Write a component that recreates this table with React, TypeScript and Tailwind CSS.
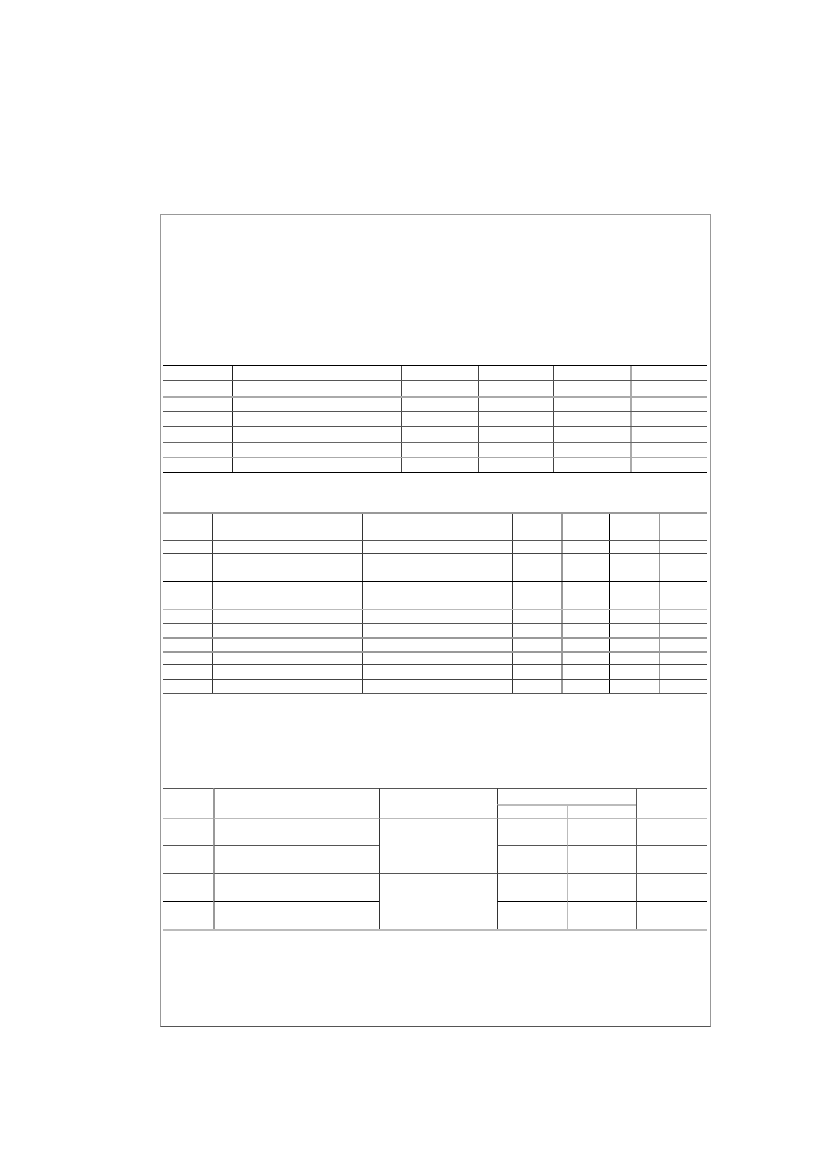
type Row = { cls: string };

const t1Cols = [
  'w-[69px]',
  'w-[169px] border-l border-l-[#222]',
  'w-[77px] border-l border-l-[#444]',
  'w-[75px] border-l border-l-[#444]',
  'w-[77px] border-l border-l-[#444]',
  'w-[77px] border-l-2 border-l-[#aaa]',
];

const t1Rows: Row[] = [
  { cls: 'h-[15px] border-t border-t-black' },
  { cls: 'h-[16px] border-t border-t-[#555]' },
  { cls: 'h-[15px] border-t-2 border-t-[#aaa]' },
  { cls: 'h-[15px] border-t border-t-[#555]' },
  { cls: 'h-[16px] border-t border-t-[#555]' },
  { cls: 'h-[15px] border-t border-t-[#666]' },
  { cls: 'h-[15px] border-t border-t-[#aaa]' },
];

const t2Cols = [
  'w-[49px]',
  'w-[150px] border-l border-l-[#333]',
  'w-[150px] border-l border-l-[#333]',
  'w-[49px] border-l border-l-[#333]',
  'w-[48px] border-l-2 border-l-[#999]',
  'w-[50px] border-l border-l-black',
  'w-[48px] border-l border-l-[#999]',
];

const t2Rows: Row[] = [
  { cls: 'h-[28px] border-t-2 border-t-[#999]' },
  { cls: 'h-[13px] border-t border-t-[#555]' },
  { cls: 'h-[28px] border-t border-t-[#444]' },
  { cls: 'h-[28px] border-t border-t-black' },
  { cls: 'h-[14px] border-t border-t-[#bbb]' },
  { cls: 'h-[14px] border-t border-t-[#555]' },
  { cls: 'h-[14px] border-t-2 border-t-[#999]' },
  { cls: 'h-[13px] border-t-2 border-t-[#999]' },
  { cls: 'h-[15px] border-t border-t-[#444]' },
  { cls: 'h-[14px] border-t border-t-[#444]' },
];

function RuledTable({ cols, rows, bottom }: { cols: string[]; rows: Row[]; bottom: string }) {
  return (
    <div className={`flex w-[544px] flex-col ${bottom}`}>
      {rows.map((row, i) => (
        <div key={i} className={`flex ${row.cls}`}>
          {cols.map((col, j) => (
            <div key={j} className={`h-full shrink-0 ${col}`} />
          ))}
        </div>
      ))}
    </div>
  );
}

// third table: grouped header + merged cells in the middle column
const c2 = 'border-l-2 border-l-[#999]';
const c3 = 'border-l border-l-[#333]';
const c4 = 'border-l border-l-[#333]';
const c5 = 'border-l border-l-[#bbb]';
const c6 = 'border-l border-l-[#555]';

function BodyRow({ top, merged }: { top: string; merged: boolean }) {
  return (
    <>
      <div className={`border-t ${top}`} />
      <div className={`border-t ${top} ${c2}`} />
      {merged && <div className={`row-span-2 border-t ${top} ${c3}`} />}
      <div className={`border-t ${top} ${c4}`} />
      <div className={`border-t ${top} ${c5}`} />
      <div className={`border-t ${top} ${c6}`} />
    </>
  );
}

function GroupedTable() {
  return (
    <div className="grid w-[544px] grid-cols-[50px_166px_118px_70px_69px_71px] grid-rows-[16px_14px_27px_28px_28px_28px] border-b-2 border-b-[#bbb]">
      <div className="row-span-2 border-t border-t-[#555]" />
      <div className={`row-span-2 border-t border-t-[#555] ${c2}`} />
      <div className={`row-span-2 border-t border-t-[#555] ${c3}`} />
      <div className={`col-span-2 border-t border-t-[#555] ${c4}`} />
      <div className={`row-span-2 border-t border-t-[#555] ${c6}`} />
      <div className={`border-t-2 border-t-[#bbb] ${c4}`} />
      <div className={`border-t-2 border-t-[#bbb] ${c5}`} />

      <BodyRow top="border-t-[#bbb]" merged />
      <BodyRow top="border-t-[#555]" merged={false} />
      <BodyRow top="border-t-[#555]" merged />
      <BodyRow top="border-t-black" merged={false} />
    </div>
  );
}

export default function App() {
  return (
    <div className="min-h-[1169px] w-full bg-white pl-[160px] pt-[214px] font-['Liberation_Sans',sans-serif]">
      <div className="flex h-[813px] w-[551px] flex-col border border-[#999] border-b-[#555] pl-[2px]">
        <div className="mt-[150px]">
          <RuledTable cols={t1Cols} rows={t1Rows} bottom="border-b border-b-black" />
        </div>
        <div className="mt-[39px]">
          <RuledTable cols={t2Cols} rows={t2Rows} bottom="border-b border-b-[#555]" />
        </div>
        <div className="mt-[94px]">
          <GroupedTable />
        </div>
      </div>
    </div>
  );
}
